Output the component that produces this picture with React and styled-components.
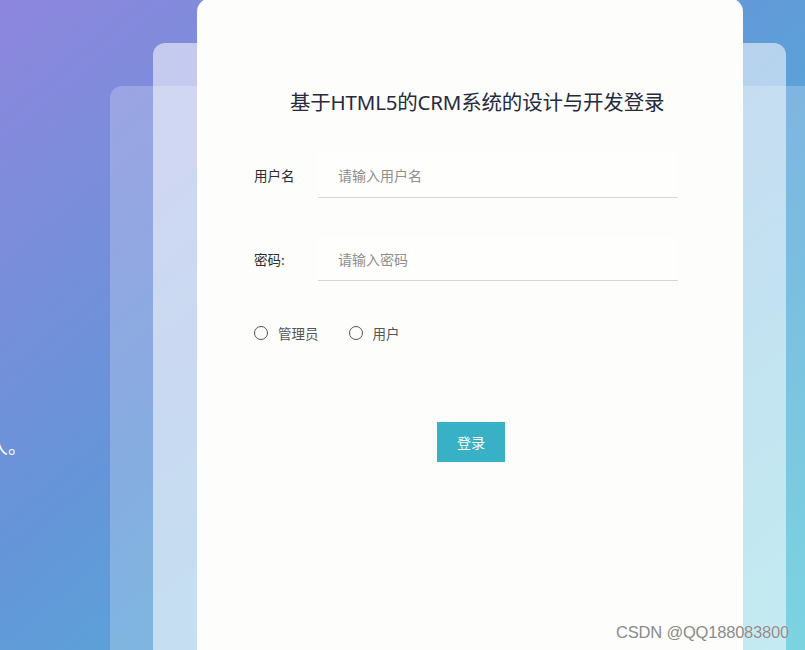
import React from 'react';
import styled, { createGlobalStyle } from 'styled-components';

const GlobalStyle = createGlobalStyle`
  html, body {
    margin: 0;
    padding: 0;
  }
  body {
    font-family: 'Noto Sans', 'Noto Sans CJK SC', sans-serif;
  }
`;

const Page = styled.div`
  position: relative;
  width: 805px;
  height: 650px;
  overflow: hidden;
  background: linear-gradient(140deg, #8e86de 0%, #6595d8 42%, #56aad8 68%, #58c8d8 100%);
`;

const Stage = styled.div`
  display: grid;
  grid-template-columns: 805px;
  grid-template-rows: 650px;
`;

const Layer = styled.div`
  grid-area: 1 / 1;
  align-self: start;
  margin-left: ${(p) => p.left}px;
  margin-top: ${(p) => p.top}px;
  width: ${(p) => p.w}px;
  height: ${(p) => 700 - p.top}px;
  border-radius: ${(p) => p.radius || 12}px;
  background: ${(p) => p.bg};
`;

const Slogan = styled.div`
  grid-area: 1 / 1;
  align-self: start;
  margin-top: 432px;
  margin-left: -1px;
  width: 28px;
  display: flex;
  justify-content: flex-end;
  overflow: hidden;
  white-space: nowrap;
  color: #fff;
  font-size: 19px;
  font-family: 'Noto Sans CJK SC', sans-serif;
`;

const Card = styled.div`
  grid-area: 1 / 1;
  align-self: start;
  margin-left: 197px;
  margin-top: -2px;
  width: 546px;
  height: 720px;
  box-sizing: border-box;
  border-radius: 14px;
  background: #fdfdfb;
  padding: 86px 0 0 57px;
  display: flex;
  flex-direction: column;
`;

const Title = styled.h1`
  margin: 0 0 0 36px;
  font-size: 20.5px;
  font-weight: 400;
  line-height: 36px;
  color: #262a3d;
  font-family: 'Noto Sans', 'Noto Sans CJK SC', sans-serif;
  letter-spacing: -0.2px;
`;

const Row = styled.div`
  display: flex;
  align-items: center;
  margin-top: ${(p) => p.gap}px;
`;

const Label = styled.label`
  width: 64px;
  font-size: 13.5px;
  color: #2b2b33;
  font-family: 'Noto Sans CJK SC', sans-serif;
`;

const Input = styled.input`
  width: 360px;
  height: ${(p) => p.h || 44}px;
  box-sizing: border-box;
  border: none;
  border-bottom: 1px solid #d6d6d6;
  background: #fefefd;
  padding: 0 20px;
  font-size: 14px;
  outline: none;
  font-family: 'Noto Sans CJK SC', sans-serif;
  &::placeholder {
    color: #8e8e8e;
  }
`;

const RadioGroup = styled.div`
  display: flex;
  align-items: center;
  margin-top: 42px;
  gap: 30px;
`;

const RadioItem = styled.label`
  display: flex;
  align-items: center;
  gap: 10px;
  font-size: 13.5px;
  color: #555;
  font-family: 'Noto Sans CJK SC', sans-serif;
`;

const Circle = styled.span`
  width: 12px;
  height: 12px;
  border: 1px solid #555;
  border-radius: 50%;
  display: inline-block;
`;

const Button = styled.button`
  align-self: flex-start;
  margin: 79px 0 0 183px;
  width: 68px;
  height: 40px;
  border: none;
  background: #38b0c6;
  color: #fff;
  font-size: 14px;
  font-family: 'Noto Sans CJK SC', sans-serif;
  cursor: pointer;
`;

const Watermark = styled.div`
  position: absolute;
  right: 16px;
  bottom: 8px;
  font-family: 'Liberation Sans', sans-serif;
  font-size: 16.5px;
  color: #8a8a8a;
  letter-spacing: -0.2px;
  text-shadow: 0 0 1px #fff;
`;

function Radio({ children }) {
  return (
    <RadioItem>
      <Circle />
      {children}
    </RadioItem>
  );
}

export default function App() {
  return (
    <>
      <GlobalStyle />
      <Page>
        <Stage>
          <Layer left={110} top={86} w={760} bg="rgba(255,255,255,0.22)" />
          <Layer left={153} top={43} w={633} bg="rgba(255,255,255,0.55)" />
          <Slogan>欢迎您的人。</Slogan>
          <Card>
            <Title>基于HTML5的CRM系统的设计与开发登录</Title>
            <Row gap={32}>
              <Label>用户名</Label>
              <Input h={46} placeholder="请输入用户名" />
            </Row>
            <Row gap={39}>
              <Label>密码:</Label>
              <Input type="password" placeholder="请输入密码" />
            </Row>
            <RadioGroup>
              <Radio>管理员</Radio>
              <Radio>用户</Radio>
            </RadioGroup>
            <Button>登录</Button>
          </Card>
        </Stage>
        <Watermark>CSDN @QQ188083800</Watermark>
      </Page>
    </>
  );
}
